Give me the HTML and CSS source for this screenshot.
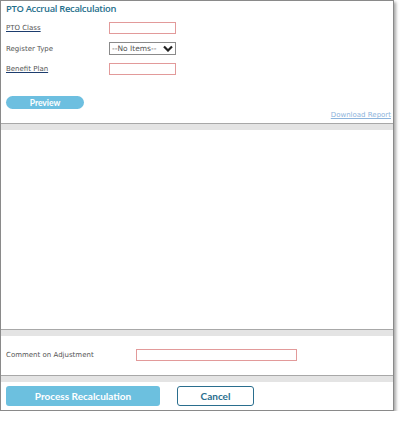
FILE: index.html
```html
<!DOCTYPE html>
<html>
<head>
<meta charset="utf-8">
<link rel="stylesheet" href="styles.css">
</head>
<body>
<div class="window">
  <section class="top">
    <h1 class="title">PTO Accrual Recalculation</h1>
    <div class="form">
      <a class="label link">PTO Class</a>
      <input class="field" type="text">
      <span class="label">Register Type</span>
      <div class="select"><span>--No Items--</span><svg class="chev" viewBox="0 0 10 7" width="10" height="7"><path d="M1 1.5 L5 5.5 L9 1.5" fill="none" stroke="#222" stroke-width="2.2"/></svg></div>
      <a class="label link">Benefit Plan</a>
      <input class="field" type="text">
    </div>
    <div class="actions">
      <button class="preview">Preview</button>
      <a class="download">Download Report</a>
    </div>
  </section>
  <div class="sep"></div>
  <section class="report"></section>
  <div class="sep"></div>
  <section class="comment">
    <span class="label">Comment on Adjustment</span>
    <input class="field wide" type="text">
  </section>
  <div class="sep"></div>
  <section class="buttons">
    <button class="process">Process Recalculation</button>
    <button class="cancel">Cancel</button>
  </section>
</div>
</body>
</html>
```
FILE: styles.css
```css
html, body { margin: 0; padding: 0; background: #fff; }
body { font-family: "DejaVu Sans", Verdana, sans-serif; }
.window {
  width: 392px;
  height: 409px;
  border: 1px solid #8a8a8a;
  box-shadow: 2px 2px 3px rgba(0,0,0,0.35);
  display: flex;
  flex-direction: column;
  background: #fff;
}
.top { height: 122px; padding: 0 1px 0 5px; display: flex; flex-direction: column; }
.title {
  margin: 2px 0 0 0;
  font-family: "Open Sans", sans-serif;
  font-weight: 600;
  font-size: 9.4px;
  line-height: 12px;
  letter-spacing: -0.3px;
  color: #1f6f8c;
}
.form {
  margin-top: 7px;
  display: grid;
  grid-template-columns: 103px 67px;
  grid-auto-rows: 12px;
  row-gap: 8.5px;
  align-items: center;
}
.label { font-size: 7px; color: #555; }
.link { color: #555; text-decoration: underline; text-decoration-color: #1d3d6e; }
.field {
  box-sizing: border-box;
  height: 12px;
  width: 67px;
  border: 1px solid #e29a9a;
  padding: 0;
  margin: 0;
  background: #fff;
}
.select {
  box-sizing: border-box;
  height: 13px;
  width: 67px;
  border: 1px solid #8a8a8a;
  display: flex;
  align-items: center;
  justify-content: space-between;
  padding: 0 2px 0 2px;
  font-size: 7.5px;
  color: #555;
}
.chev { display: block; }
.actions {
  margin-top: auto;
  display: flex;
  justify-content: space-between;
  align-items: flex-end;
  padding-bottom: 4px;
}
.preview {
  width: 78px;
  height: 13px;
  margin-bottom: 10px;
  border: none;
  border-radius: 7px;
  background: #6dbfe0;
  color: #fff;
  font-family: Lato, sans-serif;
  font-weight: 700;
  font-size: 8.5px;
  padding: 0;
}
.download {
  font-size: 7px;
  color: #8db4dc;
  text-decoration: underline;
  margin-bottom: 0;
  margin-right: 1px;
}
.sep {
  height: 6px;
  border-top: 1px solid #a8a8a8;
  background: #e4e4e4;
  flex: none;
}
.report { height: 199px; }
.comment {
  height: 39px;
  padding-left: 5px;
  display: flex;
  align-items: center;
  padding-bottom: 2px;
  box-sizing: border-box;
}
.comment .label { width: 130px; }
.field.wide { width: 161px; height: 12px; }
.buttons {
  flex: 1;
  display: flex;
  align-items: center;
  padding-left: 5px;
  gap: 17px;
}
.process, .cancel {
  height: 20px;
  border-radius: 3px;
  font-family: Lato, sans-serif;
  font-weight: 700;
  font-size: 10px;
  padding: 0;
}
.process { width: 154px; background: #6cc0df; border: none; color: #fff; }
.cancel { width: 77px; background: #fff; border: 1px solid #2a6e8e; color: #2a6e8e; }
```
